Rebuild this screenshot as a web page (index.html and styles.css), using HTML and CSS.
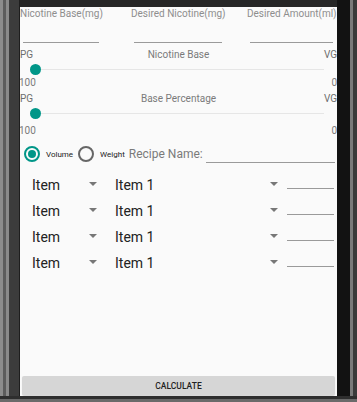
FILE: index.html
```html
<!DOCTYPE html>
<html lang="en">
<head>
  <meta charset="UTF-8" />
  <meta name="viewport" content="width=device-width, initial-scale=1.0" />
  <title>Nicotine Calculator</title>
  <link rel="stylesheet" href="styles.css">
</head>
<body>
  <div class="device">
    <div class="bezel-left"></div>
    <div class="column">
      <div class="status"></div>
      <div class="screen">
        <div class="fields">
          <div class="field f1"><span class="hint">Nicotine Base(mg)</span><span class="line"></span></div>
          <div class="field f2"><span class="hint">Desired Nicotine(mg)</span><span class="line"></span></div>
          <div class="field f3"><span class="hint">Desired Amount(ml)</span><span class="line"></span></div>
        </div>

        <div class="slider first">
          <div class="slider-head"><span>PG</span><span class="title">Nicotine Base</span><span class="right">VG</span></div>
          <div class="track"><span class="thumb"></span><span class="rail"></span></div>
          <div class="slider-foot"><span>100</span><span>0</span></div>
        </div>

        <div class="slider second">
          <div class="slider-head"><span>PG</span><span class="title">Base Percentage</span><span class="right">VG</span></div>
          <div class="track"><span class="thumb"></span><span class="rail"></span></div>
          <div class="slider-foot"><span>100</span><span>0</span></div>
        </div>

        <div class="mode-row">
          <span class="radio checked"></span><span class="radio-label">Volume</span>
          <span class="radio"></span><span class="radio-label">Weight</span>
          <span class="recipe">Recipe Name:</span>
          <span class="recipe-line"></span>
        </div>

        <div class="items">
          <div class="item-row">
            <div class="spin kind"><span>Item</span><i class="arrow"></i></div>
            <div class="spin pick"><span>Item 1</span><i class="arrow"></i></div>
            <span class="amount"></span>
          </div>
          <div class="item-row">
            <div class="spin kind"><span>Item</span><i class="arrow"></i></div>
            <div class="spin pick"><span>Item 1</span><i class="arrow"></i></div>
            <span class="amount"></span>
          </div>
          <div class="item-row">
            <div class="spin kind"><span>Item</span><i class="arrow"></i></div>
            <div class="spin pick"><span>Item 1</span><i class="arrow"></i></div>
            <span class="amount"></span>
          </div>
          <div class="item-row">
            <div class="spin kind"><span>Item</span><i class="arrow"></i></div>
            <div class="spin pick"><span>Item 1</span><i class="arrow"></i></div>
            <span class="amount"></span>
          </div>
        </div>

        <button class="calc">CALCULATE</button>
      </div>
    </div>
    <div class="bezel-right"></div>
    <div class="bezel-bottom"></div>
  </div>
</body>
</html>
```

FILE: styles.css
```css
* {
  box-sizing: border-box;
}
body {
  margin: 0;
  background: #333;
  font-family: Roboto, 'Noto Sans', sans-serif;
  overflow: hidden;
}
.device {
  width: 357px;
  height: 402px;
  display: grid;
  grid-template-columns: 20px 317px 20px;
  grid-template-rows: 396px 6px;
}
.bezel-left {
  background: linear-gradient(to right, #8c8c8c 0 3px, #5c5c5c 3px 6px, #8a8a8a 6px 9px, #3c3c3c 9px 19px, #1e1e1e 19px);
}
.bezel-right {
  background: linear-gradient(to right, #121212 0 13px, #7a7a7a 13px 16px, #3a3a3a 16px);
}
.bezel-bottom {
  grid-column: 1 / 4;
  background: linear-gradient(#2e2e2e 0 3px, #6a6a6a 3px);
}
.column {
  display: flex;
  flex-direction: column;
}
.status {
  height: 7px;
  background: #262626;
}
.screen {
  flex: 1;
  background: #fafafa;
  display: flex;
  flex-direction: column;
  overflow: hidden;
}

/* top inputs */
.fields {
  display: flex;
}
.field {
  display: flex;
  flex-direction: column;
  overflow: hidden;
}
.f1 { width: 111px; }
.f2 { width: 116px; }
.f3 { flex: 1; }
.hint {
  font-size: 10px;
  line-height: 14px;
  color: #8e8e8e;
  white-space: nowrap;
}
.line {
  height: 1px;
  margin: 21px 0 0 3px;
  background: #9a9a9a;
}
.f1 .line { width: 76px; }
.f2 .line { width: 88px; }
.f3 .line { width: 83px; }

/* sliders */
.slider.first { margin-top: 5px; }
.slider.second { margin-top: 3px; }
.slider-head {
  display: grid;
  grid-template-columns: 1fr auto 1fr;
  font-size: 10px;
  line-height: 14px;
  color: #6e6e6e;
}
.slider-head .title {
  color: #7a7a7a;
}
.slider-head .right {
  text-align: right;
}
.track {
  height: 14px;
  display: flex;
  align-items: center;
}
.thumb {
  width: 11px;
  height: 11px;
  margin-left: 10px;
  border-radius: 50%;
  background: #009688;
}
.rail {
  flex: 1;
  height: 1px;
  margin-right: 13px;
  background: #e6e6e6;
}
.slider-foot {
  display: flex;
  justify-content: space-between;
  margin-left: -1px;
  font-size: 10px;
  line-height: 13px;
  color: #7a7a7a;
}
.slider.second .slider-foot { margin-top: 4px; }

/* mode + recipe */
.mode-row {
  display: flex;
  align-items: center;
  height: 18px;
  margin-top: 8px;
  padding-left: 4px;
}
.radio {
  width: 16px;
  height: 16px;
  border: 2px solid #666;
  border-radius: 50%;
  display: flex;
  align-items: center;
  justify-content: center;
}
.radio.checked {
  border-color: #009688;
}
.radio.checked::after {
  content: '';
  width: 8px;
  height: 8px;
  border-radius: 50%;
  background: #009688;
}
.radio-label {
  font-size: 8px;
  color: #222;
  margin: 0 5px 0 6px;
}
.recipe {
  font-size: 12px;
  color: #7a7a7a;
  margin-left: -1px;
}
.recipe-line {
  flex: 1;
  height: 1px;
  align-self: flex-end;
  margin: 0 2px 0 3px;
  background: #9a9a9a;
}

/* spinner rows */
.items {
  margin-top: 9px;
}
.item-row {
  display: flex;
  align-items: center;
  height: 26px;
  padding-left: 12px;
}
.spin {
  display: flex;
  align-items: center;
  font-size: 14px;
  color: #222;
}
.spin.kind { width: 83px; }
.spin.pick { width: 172px; }
.arrow {
  width: 0;
  height: 0;
  margin-left: auto;
  margin-top: -3px;
  border-left: 4.5px solid transparent;
  border-right: 4.5px solid transparent;
  border-top: 4.5px solid #777;
}
.kind .arrow { margin-right: 18px; }
.pick .arrow { margin-right: 9px; }
.amount {
  width: 47px;
  height: 1px;
  margin-top: 7px;
  background: #9a9a9a;
}

.calc {
  margin: auto 2px 1px;
  height: 19px;
  border: none;
  border-radius: 2px;
  background: #d6d6d6;
  box-shadow: 0 1px 1px rgba(0, 0, 0, 0.15);
  font-family: Roboto, 'Noto Sans', sans-serif;
  font-size: 8.5px;
  font-weight: 500;
  color: #222;
}
```
